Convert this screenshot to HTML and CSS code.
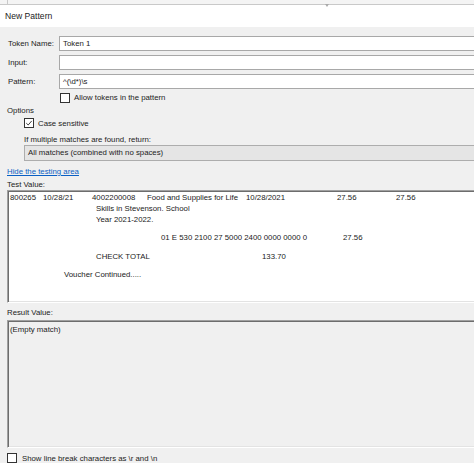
FILE: index.html
```html
<!DOCTYPE html>
<html lang="en">
<head>
  <meta charset="UTF-8" />
  <meta name="viewport" content="width=device-width, initial-scale=1.0"/>
  <title>New Pattern</title>
  <link rel="stylesheet" href="styles.css">
</head>
<body>
  <div class="topbar">
    <span class="edge"></span>
    <span class="tick"></span>
  </div>
  <div class="title">New Pattern</div>

  <div class="dialog">
    <div class="field">
      <label>Token Name:</label>
      <div class="textbox">Token 1</div>
    </div>
    <div class="field">
      <label>Input:</label>
      <div class="textbox"></div>
    </div>
    <div class="field">
      <label>Pattern:</label>
      <div class="textbox">^(\d*)\s</div>
    </div>
    <div class="check indent-field">
      <span class="box"></span>
      <span>Allow tokens in the pattern</span>
    </div>

    <div class="caption options">Options</div>
    <div class="check indent-opt">
      <span class="box checked">
        <svg viewBox="0 0 10 10" width="10" height="10"><path d="M1.6 5.2 L4 7.5 L8.4 2.4" fill="none" stroke="#222" stroke-width="1.1"/></svg>
      </span>
      <span>Case sensitive</span>
    </div>
    <div class="caption multi">If multiple matches are found, return:</div>
    <div class="dropdown">All matches (combined with no spaces)</div>

    <a class="link" href="#">Hide the testing area</a>

    <div class="caption small">Test Value:</div>
    <div class="sunken test">
      <div class="line">
        <span class="c1">800265</span><span class="c2">10/28/21</span><span class="c3">4002200008</span><span class="c4">Food and Supplies for Life</span><span class="c5">10/28/2021</span><span class="c6">27.56</span><span>27.56</span>
      </div>
      <div class="line sub">Skills in Stevenson. School</div>
      <div class="line sub">Year 2021-2022.</div>
      <div class="line acct"><span class="a1">01 E 530 2100 27 5000 2400 0000 0000 0</span><span>27.56</span></div>
      <div class="line total"><span class="t1">CHECK TOTAL</span><span>133.70</span></div>
      <div class="line voucher">Voucher Continued.....</div>
    </div>

    <div class="caption result-label">Result Value:</div>
    <div class="sunken result">
      <div class="line">(Empty match)</div>
    </div>

    <div class="check footer">
      <span class="box"></span>
      <span>Show line break characters as \r and \n</span>
    </div>
  </div>
</body>
</html>
```

FILE: styles.css
```css
body {
  margin: 0;
  width: 474px;
  height: 463px;
  overflow: hidden;
  background: #f0f0f0;
  font-family: 'Liberation Sans', Arial, sans-serif;
  font-size: 7.8px;
  color: #222;
}

.topbar {
  position: relative;
  height: 4px;
  background: #f4f4f4;
  border-bottom: 1px solid #c9c9c9;
}

.topbar .edge {
  position: absolute;
  left: 7px;
  top: 0;
  width: 1px;
  height: 4px;
  background: #c9c9c9;
}

.topbar .tick {
  position: absolute;
  left: 325px;
  top: 4px;
  width: 0;
  height: 0;
  border-left: 2px solid transparent;
  border-right: 2px solid transparent;
  border-top: 3px solid #aaa;
}

.title {
  height: 22px;
  line-height: 22px;
  padding-left: 5px;
  background: #fff;
  font-size: 8.6px;
}

.dialog {
  padding: 9px 0 0 7px;
}

.field {
  display: flex;
  align-items: center;
  height: 15px;
  margin-bottom: 4px;
}

.field label {
  width: 51px;
  padding-left: 1px;
}

.textbox {
  flex: 1;
  height: 13px;
  line-height: 13px;
  padding-left: 3px;
  background: #fff;
  border: 1px solid #a8a8a8;
  border-right: none;
}

.check {
  display: flex;
  align-items: center;
  height: 10px;
  gap: 4px;
}

.box {
  box-sizing: border-box;
  width: 10px;
  height: 10px;
  background: #fff;
  border: 1px solid #333;
  display: flex;
  align-items: center;
  justify-content: center;
}

.box svg {
  display: block;
  width: 8px;
  height: 8px;
}

.indent-field {
  margin-top: -1px;
  padding-left: 53px;
  height: 11px;
}

.caption {
  height: 10px;
  line-height: 10px;
}

.options {
  margin-top: 2px;
  height: 11px;
  line-height: 11px;
}

.indent-opt {
  margin-top: 2px;
  padding-left: 17px;
}

.multi {
  margin-top: 6px;
  padding-left: 17px;
  height: 11px;
  line-height: 11px;
}

.dropdown {
  margin-left: 17px;
  height: 14px;
  line-height: 14px;
  padding-left: 3px;
  background: #e5e5e5;
  border: 1px solid #adadad;
  border-right: none;
}

.link {
  display: block;
  margin-top: 5px;
  height: 11px;
  line-height: 11px;
  color: #0a5fc4;
  text-decoration: underline;
}

.small {
  margin-top: 3px;
}

.sunken {
  box-sizing: border-box;
  border-top: 1px solid #a0a0a0;
  border-left: 1px solid #a0a0a0;
  border-bottom: 1px solid #fff;
  box-shadow: inset 1px 1px 0 #6d6d6d, inset 0 -1px 0 #e3e3e3;
  padding: 1px 0 0 2px;
}

.test {
  height: 113px;
  background: #fff;
}

.line {
  height: 11px;
  line-height: 11px;
  white-space: nowrap;
}

.line span {
  display: inline-block;
}

.c1 { width: 33px; }
.c2 { width: 49px; }
.c3 { width: 55px; }
.c4 { width: 99px; }
.c5 { width: 91px; }
.c6 { width: 59px; }

.sub { padding-left: 86px; }

.acct {
  margin-top: 7px;
  padding-left: 151px;
}

.a1 { width: 182px; }

.total {
  margin-top: 8px;
  padding-left: 86px;
}

.t1 { width: 166px; }

.voucher {
  margin-top: 7px;
  padding-left: 54px;
}

.result-label {
  margin-top: 5px;
}

.result {
  margin-top: 2px;
  height: 128px;
  background: #f0f0f0;
  padding-top: 3px;
}

.footer {
  margin-top: 5px;
  gap: 5px;
}
```
